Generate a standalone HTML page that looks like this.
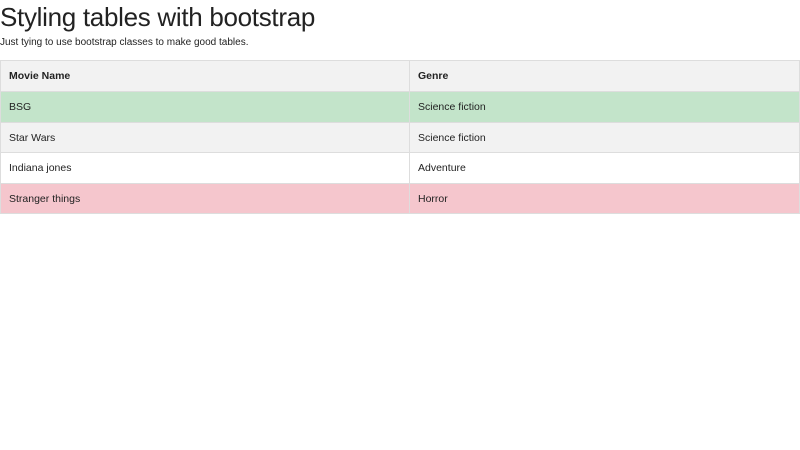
<!DOCTYPE html>
<html><head><style>
body{margin:0;background:#fff;font-family:"Liberation Sans",sans-serif;color:#222;}
h1{margin:0;position:absolute;left:0;top:1px;font-size:26px;font-weight:normal;line-height:33px;letter-spacing:-0.3px;}
p{margin:0;position:absolute;left:0;top:36px;font-size:10px;line-height:14px;}
table{position:absolute;left:0;top:60px;width:800px;border-collapse:collapse;font-size:10.5px;}
td,th{height:31px;padding:0 0 0 8px;text-align:left;border:1px solid #ddd;box-sizing:border-box;}
tr.s td{height:30px}
th{font-weight:bold;}
td:first-child,th:first-child{width:409px;}
.g{background:#c3e4ca}.a{background:#f2f2f2}.r{background:#f5c6cd}
</style></head><body>
<h1>Styling tables with bootstrap</h1>
<p>Just tying to use bootstrap classes to make good tables.</p>
<table>
<tr class="a"><th>Movie Name</th><th>Genre</th></tr>
<tr class="g"><td>BSG</td><td>Science fiction</td></tr>
<tr class="a s"><td>Star Wars</td><td>Science fiction</td></tr>
<tr><td>Indiana jones</td><td>Adventure</td></tr>
<tr class="r s"><td>Stranger things</td><td>Horror</td></tr>
</table>
</body></html>
